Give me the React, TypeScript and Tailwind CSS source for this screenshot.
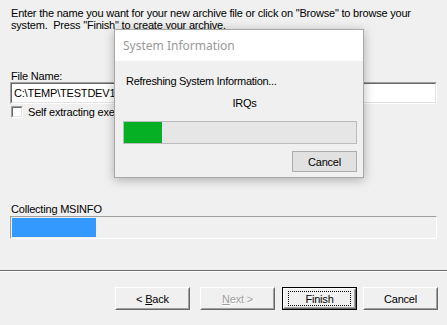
import React from 'react';

const sans = "font-['Liberation_Sans',Arial,sans-serif]";

function ClassicButton({
  children,
  isDefault = false,
  disabled = false,
  className = '',
}: {
  children: React.ReactNode;
  isDefault?: boolean;
  disabled?: boolean;
  className?: string;
}) {
  return (
    <div
      className={`h-[23px] w-[75px] ${isDefault ? 'border border-black' : ''} ${className}`}
    >
      <div className="h-full w-full border border-t-white border-l-white border-r-[#696969] border-b-[#696969] bg-[#f0f0f0]">
        <div className="flex h-full w-full items-center justify-center border border-t-[#f0f0f0] border-l-[#f0f0f0] border-r-[#a0a0a0] border-b-[#a0a0a0]">
          {isDefault ? (
            <div className="flex h-[15px] w-[63px] items-center justify-center border border-dotted border-black">
              {children}
            </div>
          ) : (
            <div
              className={
                disabled ? 'text-[#a0a0a0] [text-shadow:1px_1px_0_#ffffff]' : 'text-black'
              }
            >
              {children}
            </div>
          )}
        </div>
      </div>
    </div>
  );
}

function SunkenBox({ className = '', children }: { className?: string; children?: React.ReactNode }) {
  return (
    <div className={`border border-t-[#a0a0a0] border-l-[#a0a0a0] border-r-white border-b-white ${className}`}>
      {children}
    </div>
  );
}

export default function App() {
  return (
    <div
      className={`relative h-[325px] w-[447px] overflow-hidden bg-[#f0f0f0] text-[11px] leading-[12px] text-black ${sans} tracking-[-0.2px]`}
    >
      {/* Wizard page */}
      <div className="px-[10px] pt-[7px]">
        <p className="pl-[1px]">
          Enter the name you want for your new archive file or click on "Browse" to browse your
          <br />
          system.&nbsp; Press "Finish" to create your archive.
        </p>

        <div className="mt-[39px] pl-[1px]">File Name:</div>
        <SunkenBox className="h-[22px]">
          <div className="h-full border border-t-[#696969] border-l-[#696969] border-r-[#e3e3e3] border-b-[#e3e3e3] bg-white pl-[2px] pt-[3px]">
            C:\TEMP\TESTDEV1.CAB
          </div>
        </SunkenBox>

        <div className="mt-[2px] flex items-center gap-[5px] pl-[1px]">
          <SunkenBox className="h-[12px] w-[12px]">
            <div className="h-full w-full border border-t-[#696969] border-l-[#696969] border-r-[#e3e3e3] border-b-[#e3e3e3] bg-white" />
          </SunkenBox>
          <span>Self extracting executable</span>
        </div>

        <div className="mt-[85px] pl-[1px]">Collecting MSINFO</div>
        <SunkenBox className="mt-[1px] h-[23px] p-[1px]">
          <div className="h-full w-[84px] bg-[#3399ff]" />
        </SunkenBox>
      </div>

      <div className="mt-[31px] border-t border-b border-t-[#696969] border-b-white" />

      <div className="mt-[15px] flex pl-[115px]">
        <ClassicButton>
          &lt; <span className="underline">B</span>ack
        </ClassicButton>
        <ClassicButton disabled className="ml-[10px]">
          <span className="underline">N</span>ext &gt;
        </ClassicButton>
        <ClassicButton isDefault className="ml-[7px]">
          Finish
        </ClassicButton>
        <ClassicButton className="ml-[6px]">Cancel</ClassicButton>
      </div>

      {/* Progress dialog overlay */}
      <div className="absolute left-[114px] top-[29px] flex h-[149px] w-[250px] flex-col border border-[#a8a8a8] bg-[#f0f0f0] shadow-[0_2px_10px_rgba(0,0,0,0.28)]">
        <div className="flex h-[31px] items-center bg-white pl-[8px] font-['Noto_Sans',sans-serif] text-[12px] tracking-normal text-[#9a9a9a]">
          System Information
        </div>
        <div className="flex flex-1 flex-col pl-[8px] pr-[6px]">
          <div className="mt-[14px] pl-[3px] tracking-[-0.3px]">Refreshing System Information...</div>
          <div className="mt-[10px] pl-[9px] text-center tracking-[-0.3px]">IRQs</div>
          <div className="mt-[12px] h-[23px] border border-[#bcbcbc] bg-[#e6e6e6]">
            <div className="h-full w-[38px] bg-[#06b025]" />
          </div>
          <div className="mt-[7px] flex justify-end">
            <div className="flex h-[21px] w-[65px] items-center justify-center border border-[#adadad] bg-[#e1e1e1] tracking-[-0.2px]">
              Cancel
            </div>
          </div>
        </div>
      </div>
    </div>
  );
}
